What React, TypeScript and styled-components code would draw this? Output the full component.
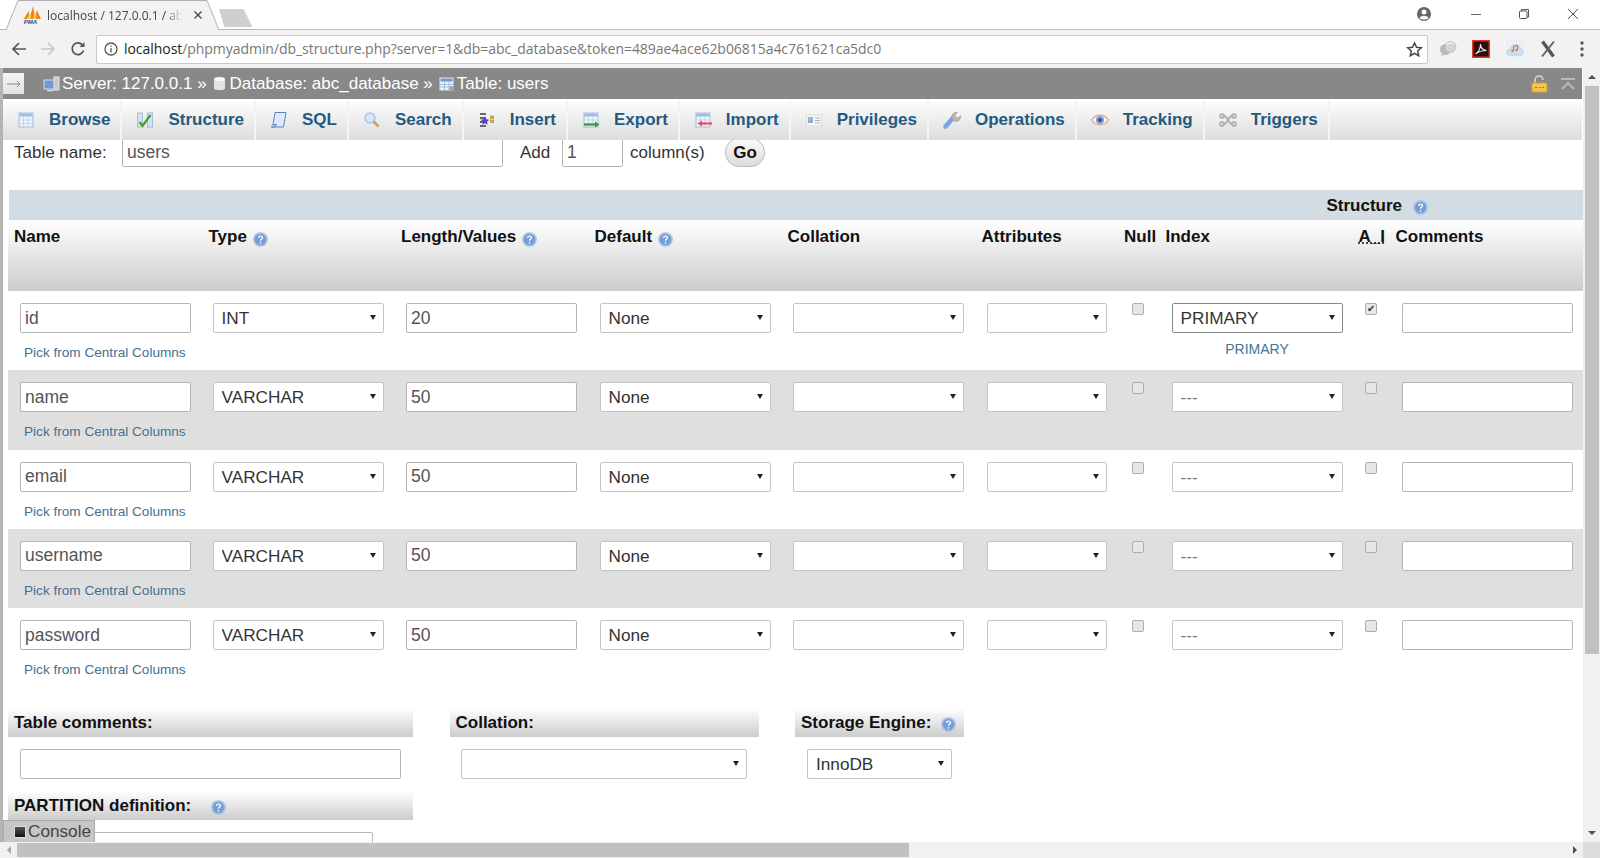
import { ReactElement, ReactNode } from 'react';
import styled, { createGlobalStyle } from 'styled-components';

//
// Data
//

const COLUMN_WIDTHS = [195.5, 192.5, 193.5, 193, 194, 142.5, 41.5, 193, 37, 192.5];

const FIELDS = [
  { name: 'id', type: 'INT', length: '20', index: 'PRIMARY', autoIncrement: true },
  { name: 'name', type: 'VARCHAR', length: '50', index: '---', autoIncrement: false },
  { name: 'email', type: 'VARCHAR', length: '50', index: '---', autoIncrement: false },
  { name: 'username', type: 'VARCHAR', length: '50', index: '---', autoIncrement: false },
  { name: 'password', type: 'VARCHAR', length: '50', index: '---', autoIncrement: false },
];

//
// Styles
//

const GlobalStyle = createGlobalStyle`
  html, body {
    margin: 0;
    height: 100%;
    overflow: hidden;
    background: #fff;
  }
  * {
    box-sizing: border-box;
  }
`;

const Page = styled.div`
  width: 1600px;
  height: 858px;
  display: flex;
  flex-direction: column;
  overflow: hidden;
  font-family: "Liberation Sans", Arial, sans-serif;
  color: #222;
`;

const TabStrip = styled.div`
  height: 30px;
  flex: none;
  display: flex;
  background: #fff;
  border-bottom: 1px solid #b9b9b9;
`;

const BrowserTab = styled.div`
  position: relative;
  width: 220px;
  height: 30px;
  margin-left: 5px;
  display: flex;
  align-items: center;
  padding-left: 17px;
  font-family: "Open Sans", sans-serif;
  font-size: 12px;
  color: #444;
`;

const TabOutline = styled.svg`
  position: absolute;
  inset: 0;
`;

const TabFavicon = styled.svg`
  position: relative;
  flex: none;
`;

const TabTitle = styled.span`
  position: relative;
  width: 135px;
  margin-left: 5px;
  overflow: hidden;
  white-space: nowrap;
  mask-image: linear-gradient(to right, #000 88%, transparent);
`;

const TabClose = styled.svg`
  position: relative;
  margin-left: 11px;
`;

const NewTab = styled.svg`
  margin: 8px 0 0 -7px;
`;

const WindowControls = styled.div`
  margin-left: auto;
  display: flex;
  padding-right: 3px;
`;

const WindowButton = styled.div<{ $gap?: number }>`
  width: 48.5px;
  height: 28px;
  margin-right: ${({ $gap }) => $gap ?? 0}px;
  display: flex;
  align-items: center;
  justify-content: center;
`;

const Toolbar = styled.div`
  height: 38px;
  flex: none;
  display: flex;
  align-items: center;
  padding: 0 1.5px 0 4px;
  background: #f2f2f2;
`;

const NavButton = styled.div`
  width: 29.5px;
  display: flex;
  justify-content: center;
`;

const AddressBar = styled.div`
  flex: 1;
  height: 29px;
  margin: 0 3px 0 3.5px;
  display: flex;
  align-items: center;
  padding: 0 4px 0 6px;
  background: #fff;
  border: 1px solid #c9c9c9;
  border-radius: 2px;
`;

const Url = styled.div`
  flex: 1;
  margin-left: 5px;
  padding-bottom: 2px;
  font-family: "Open Sans", sans-serif;
  font-size: 14px;
  letter-spacing: -0.05px;
  white-space: nowrap;
  color: #777;
`;

const UrlHost = styled.span`
  color: #222;
`;

const ExtensionButton = styled.div`
  width: 33.5px;
  display: flex;
  justify-content: center;
`;

const Viewport = styled.div`
  flex: 1;
  min-height: 0;
  display: grid;
  grid-template-columns: 1583px 17px;
  grid-template-rows: 774px 16px;
`;

const Content = styled.div`
  position: relative;
  overflow: hidden;
  background: #fff;
  border-left: 3px solid #b4b4b4;
`;

const PmaHeader = styled.div`
  height: 31px;
  margin-right: 1px;
  display: flex;
  align-items: center;
  background: #888;
  color: #fff;
  font-size: 17px;
`;

const CollapseButton = styled.div`
  width: 21px;
  height: 21px;
  margin-right: 19px;
  display: flex;
  align-items: center;
  justify-content: center;
  background: linear-gradient(#f4f4f4, #e2e2e2);
`;

const Crumb = styled.span`
  display: flex;
  align-items: center;
  gap: 2px;
  margin-right: 6px;
  white-space: nowrap;
`;

const HeaderIcons = styled.div`
  margin-left: auto;
  display: flex;
  align-items: center;
  gap: 12px;
  padding-right: 6px;
`;

const TabMenu = styled.nav`
  position: relative;
  z-index: 2;
  height: 41px;
  margin-right: 1px;
  display: flex;
  background: linear-gradient(#fff, #dcdcdc);
`;

const MenuItem = styled.a`
  display: flex;
  align-items: center;
  gap: 12px;
  padding: 0 10px 0 12px;
  font-size: 17px;
  font-weight: 700;
  color: #235a81;
  border-right: 2px solid #f4f4f4;
  white-space: nowrap;
`;

const MenuIcon = styled.span`
  width: 22px;
  flex: none;
  display: flex;
  justify-content: center;
`;

const TableNameRow = styled.div`
  height: 30px;
  margin-top: -3px;
  display: flex;
  align-items: flex-start;
  font-size: 17px;
  color: #333;
`;

const RowLabel = styled.label<{ $width: number; $indent: number }>`
  width: ${({ $width }) => $width}px;
  padding: 6px 0 0 ${({ $indent }) => $indent}px;
  line-height: 20px;
  flex: none;
  white-space: nowrap;
`;

const TextInput = styled.input<{ $width: number }>`
  width: ${({ $width }) => $width}px;
  height: 30px;
  padding: 0 4px;
  display: block;
  flex: none;
  font-family: inherit;
  font-size: 17.5px;
  color: #555;
  background: #fff;
  border: 1px solid #b5b5b5;
  border-radius: 2px;
  outline: none;
`;

const GoButton = styled.button`
  width: 40px;
  height: 29px;
  margin: 1px 0 0 0;
  padding: 0;
  font-family: inherit;
  font-size: 17px;
  font-weight: 700;
  color: #111;
  background: linear-gradient(#fafafa, #dcdcdc);
  border: 1px solid #bbb;
  border-radius: 14px;
`;

const StructureBar = styled.div`
  height: 30px;
  margin: 23px 0 0 6px;
  display: flex;
  justify-content: flex-end;
  align-items: center;
  gap: 11px;
  padding: 1px 155px 0 0;
  background: #d3dce3;
  font-size: 17px;
  font-weight: 700;
  color: #111;
`;

const FieldsTable = styled.table`
  width: 1575px;
  margin-left: 5px;
  table-layout: fixed;
  border-collapse: collapse;
`;

const FieldsHead = styled.thead`
  background: linear-gradient(#fff, #ccc);
`;

const HeadCell = styled.th`
  height: 71px;
  padding: 7px 0 0 5px;
  vertical-align: top;
  text-align: left;
  font-size: 17px;
  line-height: 20px;
  color: #111;
  white-space: nowrap;
`;

const NameHeadCell = styled(HeadCell)`
  padding-left: 6px;
`;

const HeadInner = styled.span`
  display: inline-flex;
  align-items: center;
  gap: 6px;
`;

const AutoIncrementLabel = styled.span`
  text-decoration: underline dotted;
`;

const FieldRow = styled.tr<{ $striped: boolean }>`
  height: 79.3px;
  background: ${({ $striped }) => ($striped ? '#dfdfdf' : '#fff')};
`;

const FieldCell = styled.td<{ $inset?: number }>`
  padding: 12px 0 0 ${({ $inset }) => $inset ?? 10}px;
  vertical-align: top;
`;

const CheckCell = styled.td<{ $shift: number }>`
  padding: 10px ${({ $shift }) => $shift}px 0 0;
  vertical-align: top;
  text-align: center;
`;

const CentralLink = styled.a`
  display: block;
  margin: 12px 0 0 4px;
  font-size: 13.6px;
  line-height: 16px;
  color: #45708f;
  white-space: nowrap;
`;

const IndexName = styled.div`
  width: 171px;
  margin-top: 8px;
  text-align: center;
  font-size: 14px;
  line-height: 16px;
  color: #437698;
`;

const SelectWrap = styled.div<{ $width: number }>`
  position: relative;
  width: ${({ $width }) => $width}px;
  height: 30px;

  &::after {
    content: "";
    position: absolute;
    right: 8px;
    top: 12px;
    border-style: solid;
    border-width: 5px 3px 0;
    border-color: #222 transparent transparent;
  }
`;

const Select = styled.select<{ $strong?: boolean; $muted?: boolean }>`
  appearance: none;
  width: 100%;
  height: 100%;
  padding: 0 0 0 8px;
  font-family: inherit;
  font-size: 17.2px;
  color: ${({ $muted }) => ($muted ? '#777' : '#333')};
  background: #fff;
  border: 1px solid ${({ $strong }) => ($strong ? '#8a8a8a' : '#c4c4c4')};
  border-radius: 2px;
  outline: none;
`;

const CheckBox = styled.input`
  appearance: none;
  position: relative;
  display: inline-block;
  width: 12px;
  height: 12px;
  margin: 0;
  background: #e7e7e7;
  border: 1px solid #adadad;
  border-radius: 2px;

  &:checked::after {
    content: "✔";
    position: absolute;
    left: 1px;
    top: -1px;
    font-size: 10px;
    line-height: 12px;
    color: #333;
  }
`;

const OptionsRow = styled.div`
  display: flex;
  gap: 36.5px;
  margin: 21px 0 0 5px;
`;

const OptionBlock = styled.div<{ $width: number }>`
  width: ${({ $width }) => $width}px;
`;

const BlockHeading = styled.div`
  height: 29px;
  display: flex;
  align-items: center;
  gap: 10px;
  padding-left: 6px;
  background: linear-gradient(#fff, #ccc);
  font-size: 17px;
  font-weight: 700;
  color: #111;
  white-space: nowrap;
`;

const BlockBody = styled.div<{ $inset: number }>`
  padding: 12px 0 0 ${({ $inset }) => $inset}px;
`;

const PartitionBlock = styled.div`
  width: 405px;
  margin: 12px 0 0 5px;
`;

const PartitionHeading = styled(BlockHeading)`
  gap: 20px;
`;

const Console = styled.div`
  position: absolute;
  left: 0;
  bottom: 0;
  width: 92px;
  height: 22px;
  display: flex;
  align-items: center;
  gap: 2px;
  padding-left: 10px;
  font-size: 17.2px;
  color: #444;
  background: #c6c6c6;
  border: 1px solid #aaa;
  border-bottom: none;
`;

const ConsoleIcon = styled.span`
  width: 12px;
  height: 12px;
  background: linear-gradient(#555, #111);
  border: 1px solid #ddd;
`;

const VerticalScrollbar = styled.div`
  display: flex;
  flex-direction: column;
  align-items: center;
  background: #f1f1f1;
  grid-row: 1;
  grid-column: 2;
`;

const VerticalThumb = styled.div`
  width: 14px;
  height: 568px;
  background: #c1c1c1;
`;

const ScrollSpacer = styled.div`
  flex: 1;
`;

const ArrowBox = styled.div`
  width: 17px;
  height: 18px;
  flex: none;
  display: flex;
  align-items: center;
  justify-content: center;
`;

const Arrow = styled.i<{ $dir: 'up' | 'down' | 'left' | 'right'; $color?: string }>`
  border-style: solid;
  border-color: transparent;
  ${({ $dir, $color = '#505050' }) => ({
    up: `border-width: 0 4px 4px; border-bottom-color: ${$color};`,
    down: `border-width: 4px 4px 0; border-top-color: ${$color};`,
    left: `border-width: 4px 4px 4px 0; border-right-color: ${$color};`,
    right: `border-width: 4px 0 4px 4px; border-left-color: ${$color};`,
  }[$dir])}
`;

const HorizontalScrollbar = styled.div`
  display: flex;
  align-items: center;
  background: #f1f1f1;
  grid-row: 2;
  grid-column: 1;
`;

const HorizontalThumb = styled.div`
  width: 892px;
  height: 14px;
  flex: none;
  background: #c1c1c1;
`;

const ScrollCorner = styled.div`
  grid-row: 2;
  grid-column: 2;
  background: #dcdcdc;
`;

const HelpSvg = styled.svg`
  margin-top: 4px;
  flex: none;
`;

//
// Icons
//

const HelpIcon = (): ReactElement => (
  <HelpSvg width="15" height="15" viewBox="0 0 15 15">
    <circle cx="7.5" cy="7.5" r="7.3" fill="#a3bfe6" />
    <circle cx="7.5" cy="7.5" r="5.6" fill="#739dd7" />
    <path d="M5.6 6c0-2.5 3.9-2.5 3.9-.3 0 1.400-2 1.500-2 3" fill="none" stroke="#f4f8ff" strokeWidth="1.400" />
    <circle cx="7.5" cy="10.800" r=".9" fill="#f4f8ff" />
  </HelpSvg>
);

const GridIcon = ({ children }: { children?: ReactNode }): ReactElement => (
  <svg width="20" height="20" viewBox="0 0 20 20">
    <rect x="3" y="3" width="14" height="14" fill="#f0f4fb" stroke="#a3bbdb" />
    <rect x="3.500" y="3.500" width="13" height="3" fill="#9dbce6" />
    <path d="M3 10h14M3 13.500h14M7.500 6v11M12 6v11" stroke="#c4d4ea" />
    {children}
  </svg>
);

const MENU = [
  { label: 'Browse', icon: <GridIcon /> },
  {
    label: 'Structure',
    icon: (
      <svg width="20" height="20" viewBox="0 0 20 20">
        <rect x="2.500" y="3" width="5" height="14" fill="#d5e2f3" stroke="#a9bdd9" />
        <rect x="12.500" y="3" width="5" height="14" fill="#d5e2f3" stroke="#a9bdd9" />
        <path d="M4.500 12l3 4 8-11" fill="none" stroke="#46a02c" strokeWidth="2.200" />
      </svg>
    ),
  },
  {
    label: 'SQL',
    icon: (
      <svg width="20" height="20" viewBox="0 0 20 20">
        <path d="M6 2.500h11l-2.500 14.500h-12l1.500-2.500z" fill="#dfe9f8" stroke="#5b84bf" />
        <path d="M2.500 17c2 .5 4 .3 5-2.500H4" fill="#a9c4ea" stroke="#5b84bf" />
      </svg>
    ),
  },
  {
    label: 'Search',
    icon: (
      <svg width="20" height="20" viewBox="0 0 20 20">
        <circle cx="8" cy="8" r="5" fill="#d6e5f8" stroke="#a9c4e4" strokeWidth="1.500" />
        <path d="M11.500 11.500l5 5" stroke="#c9a15f" strokeWidth="2.600" />
      </svg>
    ),
  },
  {
    label: 'Insert',
    icon: (
      <svg width="20" height="20" viewBox="0 0 20 20">
        <path d="M3 3h6v2H3zM3 7h6v2H3zM3 11h6v2H3zM3 15h6v2H3z" fill="#666" />
        <path d="M8 6.500l1.300 2.800 3 .4-2.200 2 .6 3-2.700-1.500-2.700 1.500.6-3-2.200-2 3-.4z" fill="#5b3fd0" />
        <path d="M13.500 6h3v2.500h-3zM13.500 10h3v2.500h-3z" fill="#e8b92e" stroke="#8a6d12" strokeWidth=".5" />
      </svg>
    ),
  },
  {
    label: 'Export',
    icon: (
      <GridIcon>
        <path d="M3 14.500h12" stroke="#3f9a2d" strokeWidth="2.200" />
        <path d="M14 11.500l4.500 3-4.500 3z" fill="#3f9a2d" />
      </GridIcon>
    ),
  },
  {
    label: 'Import',
    icon: (
      <GridIcon>
        <path d="M8 13.500h11" stroke="#e8504a" strokeWidth="2.200" />
        <path d="M9 10.500l-4.500 3 4.500 3z" fill="#e8504a" />
      </GridIcon>
    ),
  },
  {
    label: 'Privileges',
    icon: (
      <svg width="20" height="20" viewBox="0 0 20 20">
        <rect x="2.500" y="5" width="15" height="11" fill="#f6f6f6" stroke="#dcdcdc" />
        <rect x="4" y="7" width="5" height="6" fill="#8bb0de" />
        <circle cx="6.500" cy="8.500" r="1.300" fill="#e7b26a" />
        <path d="M11 8h5M11 10.500h5M11 13h5" stroke="#b4b4b4" />
      </svg>
    ),
  },
  {
    label: 'Operations',
    icon: (
      <svg width="20" height="20" viewBox="0 0 20 20">
        <path d="M3.500 16.500l7-8" stroke="#78a2e4" strokeWidth="4.500" strokeLinecap="round" />
        <path d="M10 8.500a4.500 4.500 0 0 1 5.500-6l-2.500 2.500.7 2.300 2.300.7 2.500-2.500a4.500 4.500 0 0 1-6 5.500z" fill="#bbb7af" stroke="#96938c" strokeWidth=".5" />
      </svg>
    ),
  },
  {
    label: 'Tracking',
    icon: (
      <svg width="20" height="20" viewBox="0 0 20 20">
        <path d="M1.500 10c4-6.500 13-6.500 17 0-4 6.500-13 6.500-17 0z" fill="#fbeee2" stroke="#cfa988" strokeWidth="1.200" />
        <circle cx="10" cy="10" r="4" fill="#7b9cdf" />
        <circle cx="10" cy="10" r="1.800" fill="#2d3f78" />
      </svg>
    ),
  },
  {
    label: 'Triggers',
    icon: (
      <svg width="20" height="20" viewBox="0 0 20 20" fill="none" stroke="#a8a8a8" strokeWidth="1.500">
        <circle cx="4" cy="6" r="2" fill="#ddd" />
        <circle cx="4" cy="14" r="2" fill="#ddd" />
        <circle cx="16" cy="6" r="2" fill="#ddd" />
        <circle cx="16" cy="14" r="2" fill="#ddd" />
        <path d="M6 6c4 0 4 8 8 8M6 14c4 0 4-8 8-8" />
      </svg>
    ),
  },
];

const Favicon = (): ReactElement => (
  <TabFavicon width="20" height="20" viewBox="0 0 18 18">
    <path d="M1.500 12.500l4.500-7 1 7zM6.500 12.500l3.500-11.500 2 11.500zM11.500 12.500l2-8 3.500 8z" fill="#f0861c" />
    <path d="M4.500 12.500l3-5 .5 5zM10 12.500l1.500-5 1 5z" fill="#fcd36a" />
    <text x="1.500" y="17.500" fontSize="5.500" fontWeight="700" fontStyle="italic" fill="#1e4f9e" fontFamily="Liberation Sans">PMA</text>
  </TabFavicon>
);

const ServerIcon = (): ReactElement => (
  <svg width="17" height="17" viewBox="0 0 17 17">
    <rect x="1" y="5" width="11" height="9" fill="#6f9ad1" stroke="#d3dbe6" />
    <rect x="11" y="2" width="5" height="13" fill="#c9c9c9" stroke="#e5e5e5" />
    <path d="M4 15.500h6" stroke="#ddd" strokeWidth="1.500" />
  </svg>
);

const DatabaseIcon = (): ReactElement => (
  <svg width="15" height="15" viewBox="0 0 15 15">
    <path d="M1 3v9.500c0 2 11 2 11 0V3z" fill="#e3e3e3" />
    <ellipse cx="6.500" cy="3" rx="5.500" ry="2" fill="#fafafa" />
  </svg>
);

const TableIcon = (): ReactElement => (
  <svg width="16" height="16" viewBox="0 0 16 16">
    <rect x="1" y="2" width="13" height="12" fill="#eef3fb" stroke="#dbe3ee" />
    <rect x="1.500" y="2.500" width="12" height="3" fill="#6e9ad4" />
    <path d="M1 8.500h13M1 11h13M5.500 5v9M10 5v9" stroke="#a3bcdd" />
    <circle cx="12.500" cy="12.500" r="2.500" fill="#a5a5a5" />
  </svg>
);

//
// Component
//

const FieldSelect = ({
  width,
  value,
  strong,
}: {
  width: number;
  value: string;
  strong?: boolean;
}): ReactElement => (
  <SelectWrap $width={width}>
    <Select $strong={strong} $muted={value === '---'} defaultValue={value}>
      <option>{value}</option>
    </Select>
  </SelectWrap>
);

const App = (): ReactElement => (
  <Page>
    <GlobalStyle />

    <TabStrip>
      <BrowserTab>
        <TabOutline width="220" height="30" viewBox="0 0 220 30">
          <path d="M0 30h1L13 .5h189L214 30h6" fill="#f2f2f2" stroke="#b0b0b0" />
        </TabOutline>
        <Favicon />
        <TabTitle>localhost / 127.0.0.1 / abc_database</TabTitle>
        <TabClose width="10" height="10" viewBox="0 0 10 10">
          <path d="M1.500 1.500l7 7M8.500 1.500l-7 7" stroke="#444" strokeWidth="1.300" />
        </TabClose>
      </BrowserTab>
      <NewTab width="36" height="20" viewBox="0 0 36 20">
        <path d="M1 1h23a2 2 0 0 1 2 1l8 16a1 1 0 0 1-1 1H8a2 2 0 0 1-2-1z" fill="#cfcfcf" />
      </NewTab>
      <WindowControls>
        <WindowButton $gap={3}>
          <svg width="16" height="16" viewBox="0 0 16 16">
            <circle cx="8" cy="8" r="7" fill="#666" />
            <circle cx="8" cy="6" r="2.500" fill="#fff" />
            <path d="M3.500 12c1-3 8-3 9 0-2 2-7 2-9 0z" fill="#fff" />
          </svg>
        </WindowButton>
        <WindowButton>
          <svg width="12" height="12" viewBox="0 0 12 12">
            <path d="M1 6.500h10" stroke="#666" />
          </svg>
        </WindowButton>
        <WindowButton>
          <svg width="12" height="12" viewBox="0 0 12 12" fill="none" stroke="#555">
            <rect x="1.500" y="3" width="7.500" height="7.500" rx="1" />
            <path d="M3.500 3V1.500h7V9H9" />
          </svg>
        </WindowButton>
        <WindowButton>
          <svg width="12" height="12" viewBox="0 0 12 12">
            <path d="M1 1l10 10M11 1L1 11" stroke="#555" />
          </svg>
        </WindowButton>
      </WindowControls>
    </TabStrip>

    <Toolbar>
      <NavButton>
        <svg width="16" height="16" viewBox="0 0 16 16" fill="none" stroke="#555" strokeWidth="1.700">
          <path d="M15 8H2M8 2L2 8l6 6" />
        </svg>
      </NavButton>
      <NavButton>
        <svg width="16" height="16" viewBox="0 0 16 16" fill="none" stroke="#c6c6c6" strokeWidth="1.700">
          <path d="M1 8h13M8 2l6 6-6 6" />
        </svg>
      </NavButton>
      <NavButton>
        <svg width="16" height="16" viewBox="0 0 16 16" fill="none" stroke="#555" strokeWidth="1.700">
          <path d="M13.500 9.500A5.800 5.800 0 1 1 12.200 3.800" />
          <path d="M14.500 1v5h-5z" fill="#555" stroke="none" />
        </svg>
      </NavButton>
      <AddressBar>
        <svg width="16" height="16" viewBox="0 0 16 16" fill="none" stroke="#555" strokeWidth="1.300">
          <circle cx="8" cy="8" r="6" />
          <path d="M8 7v4.500M8 4.400v1.400" />
        </svg>
        <Url>
          <UrlHost>localhost</UrlHost>
          /phpmyadmin/db_structure.php?server=1&amp;db=abc_database&amp;token=489ae4ace62b06815a4c761621ca5dc0
        </Url>
        <svg width="17" height="17" viewBox="0 0 18 18" fill="none" stroke="#444" strokeWidth="1.500">
          <path d="M9 2l2.100 4.700 5.100.5-3.800 3.400 1.100 5L9 13l-4.500 2.600 1.100-5-3.800-3.400 5.100-.5z" />
        </svg>
      </AddressBar>
      <ExtensionButton>
        <svg width="18" height="18" viewBox="0 0 18 18">
          <path d="M2 16l1.500-3.500 3 1.500z" fill="#b5b5b5" />
          <circle cx="6.500" cy="9.500" r="5.500" fill="#b9b9b9" />
          <circle cx="11.500" cy="7" r="5.500" fill="#d4d4d4" stroke="#aaa" strokeWidth=".5" />
          <path d="M8 5c1-2 4-2.500 6-1" fill="none" stroke="#f2f2f2" strokeWidth="1.500" />
        </svg>
      </ExtensionButton>
      <ExtensionButton>
        <svg width="18" height="18" viewBox="0 0 18 18">
          <rect x=".75" y=".75" width="16.500" height="16.500" fill="#2a0f0f" stroke="#e5352b" strokeWidth="1.500" />
          <path d="M3.500 14c3-2 5-6 5-10 0 4 2 6 6 6.500-4 0-8 1-11 3.500z" fill="none" stroke="#f2e6e6" strokeWidth="1.100" />
        </svg>
      </ExtensionButton>
      <ExtensionButton>
        <svg width="18" height="18" viewBox="0 0 18 18">
          <rect width="18" height="18" fill="#e9f1f8" />
          <path d="M1 13c0-2.500 1.500-3.500 3.500-3.500C4.500 4 12.500 3 13.500 8c2.500 0 3.500 2 3.500 4 0 2-1 3-3 3H4c-2 0-3-.5-3-2z" fill="#cfe1f2" stroke="#b5cde3" />
          <path d="M7.500 11V6.500l4-1V10" fill="none" stroke="#e8763a" strokeWidth="1.200" />
          <circle cx="6.500" cy="11" r="1.200" fill="#e8763a" />
          <circle cx="10.500" cy="10" r="1.200" fill="#e8763a" />
        </svg>
      </ExtensionButton>
      <ExtensionButton>
        <svg width="16" height="18" viewBox="0 0 16 18">
          <path d="M2.500 1.500l11 15" stroke="#555" strokeWidth="3.400" />
          <path d="M14 1.500L2 16.500" stroke="#666" strokeWidth="2" />
        </svg>
      </ExtensionButton>
      <ExtensionButton>
        <svg width="4" height="16" viewBox="0 0 4 16" fill="#555">
          <circle cx="2" cy="2" r="1.700" />
          <circle cx="2" cy="8" r="1.700" />
          <circle cx="2" cy="14" r="1.700" />
        </svg>
      </ExtensionButton>
    </Toolbar>

    <Viewport>
      <Content>
        <PmaHeader>
          <CollapseButton>
            <svg width="14" height="8" viewBox="0 0 14 8" fill="none" stroke="#888">
              <path d="M0 4h13M10 1l3 3-3 3" />
            </svg>
          </CollapseButton>
          <Crumb><ServerIcon />Server: 127.0.0.1 »</Crumb>
          <Crumb><DatabaseIcon />Database: abc_database »</Crumb>
          <Crumb><TableIcon />Table: users</Crumb>
          <HeaderIcons>
            <svg width="17" height="18" viewBox="0 0 17 18">
              <path d="M4 8V5a4 4 0 0 1 8 0" fill="none" stroke="#d9d9d9" strokeWidth="1.500" />
              <rect x="1" y="8" width="15" height="9" rx="1" fill="#f3c550" stroke="#d89b2b" />
              <path d="M4 12.500h2M7.500 12.500h2M11 12.500h2" stroke="#a8741a" />
            </svg>
            <svg width="16" height="14" viewBox="0 0 16 14" fill="none" stroke="#b9b9b9" strokeWidth="2">
              <path d="M1 2h14M2 12l6-6 6 6" />
            </svg>
          </HeaderIcons>
        </PmaHeader>

        <TabMenu>
          {MENU.map(({ label, icon }) => (
            <MenuItem key={label}>
              <MenuIcon>{icon}</MenuIcon>
              {label}
            </MenuItem>
          ))}
        </TabMenu>

        <TableNameRow>
          <RowLabel $width={119} $indent={11}>Table name:</RowLabel>
          <TextInput $width={381} defaultValue="users" />
          <RowLabel $width={59} $indent={17}>Add</RowLabel>
          <TextInput $width={61} defaultValue="1" />
          <RowLabel $width={102} $indent={7}>column(s)</RowLabel>
          <GoButton>Go</GoButton>
        </TableNameRow>

        <StructureBar>
          Structure
          <HelpIcon />
        </StructureBar>

        <FieldsTable>
          <colgroup>
            {COLUMN_WIDTHS.map((width, i) => (
              <col key={i} style={{ width }} />
            ))}
          </colgroup>
          <FieldsHead>
            <tr>
              <NameHeadCell>Name</NameHeadCell>
              <HeadCell><HeadInner>Type <HelpIcon /></HeadInner></HeadCell>
              <HeadCell><HeadInner>Length/Values <HelpIcon /></HeadInner></HeadCell>
              <HeadCell><HeadInner>Default <HelpIcon /></HeadInner></HeadCell>
              <HeadCell>Collation</HeadCell>
              <HeadCell>Attributes</HeadCell>
              <HeadCell>Null</HeadCell>
              <HeadCell>Index</HeadCell>
              <HeadCell><AutoIncrementLabel>A_I</AutoIncrementLabel></HeadCell>
              <HeadCell>Comments</HeadCell>
            </tr>
          </FieldsHead>
          <tbody>
            {FIELDS.map((field, i) => (
              <FieldRow key={field.name} $striped={i % 2 === 1}>
                <FieldCell $inset={12}>
                  <TextInput $width={171} defaultValue={field.name} />
                  <CentralLink>Pick from Central Columns</CentralLink>
                </FieldCell>
                <FieldCell $inset={9}><FieldSelect width={171} value={field.type} /></FieldCell>
                <FieldCell><TextInput $width={171} defaultValue={field.length} /></FieldCell>
                <FieldCell><FieldSelect width={171} value="None" /></FieldCell>
                <FieldCell><FieldSelect width={171} value="" /></FieldCell>
                <FieldCell><FieldSelect width={120} value="" /></FieldCell>
                <CheckCell $shift={3}><CheckBox type="checkbox" /></CheckCell>
                <FieldCell $inset={11}>
                  <FieldSelect width={171} value={field.index} strong={field.index === 'PRIMARY'} />
                  {field.index === 'PRIMARY' && <IndexName>PRIMARY</IndexName>}
                </FieldCell>
                <CheckCell $shift={3}><CheckBox type="checkbox" defaultChecked={field.autoIncrement} /></CheckCell>
                <FieldCell $inset={11}><TextInput $width={171} /></FieldCell>
              </FieldRow>
            ))}
          </tbody>
        </FieldsTable>

        <OptionsRow>
          <OptionBlock $width={405}>
            <BlockHeading>Table comments:</BlockHeading>
            <BlockBody $inset={12}><TextInput $width={381} /></BlockBody>
          </OptionBlock>
          <OptionBlock $width={309}>
            <BlockHeading>Collation:</BlockHeading>
            <BlockBody $inset={11}><FieldSelect width={286} value="" /></BlockBody>
          </OptionBlock>
          <OptionBlock $width={169}>
            <BlockHeading>Storage Engine: <HelpIcon /></BlockHeading>
            <BlockBody $inset={12}><FieldSelect width={145} value="InnoDB" /></BlockBody>
          </OptionBlock>
        </OptionsRow>

        <PartitionBlock>
          <PartitionHeading>PARTITION definition: <HelpIcon /></PartitionHeading>
          <BlockBody $inset={12}><TextInput $width={353} /></BlockBody>
        </PartitionBlock>

        <Console>
          <ConsoleIcon />
          Console
        </Console>
      </Content>

      <VerticalScrollbar>
        <ArrowBox><Arrow $dir="up" /></ArrowBox>
        <VerticalThumb />
        <ScrollSpacer />
        <ArrowBox><Arrow $dir="down" /></ArrowBox>
      </VerticalScrollbar>

      <HorizontalScrollbar>
        <ArrowBox><Arrow $dir="left" $color="#a3a3a3" /></ArrowBox>
        <HorizontalThumb />
        <ScrollSpacer />
        <ArrowBox><Arrow $dir="right" /></ArrowBox>
      </HorizontalScrollbar>

      <ScrollCorner />
    </Viewport>
  </Page>
);

export default App;
